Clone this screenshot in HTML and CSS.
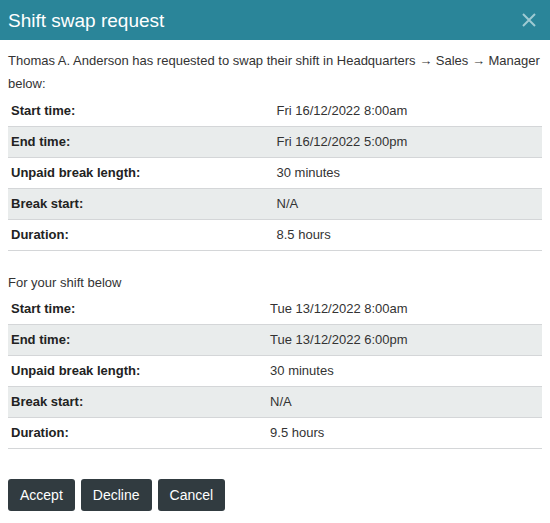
FILE: index.html
```html
<!DOCTYPE html>
<html>
<head>
<meta charset="utf-8">
<link rel="stylesheet" href="styles.css">
</head>
<body>
<div class="modal">
  <div class="modal-header">
    <h1 class="title">Shift swap request</h1>
    <button class="close" aria-label="Close">
      <svg width="14" height="14" viewBox="0 0 14 14"><path d="M1 1 L13 13 M13 1 L1 13" stroke="currentColor" stroke-width="2" fill="none"/></svg>
    </button>
  </div>
  <div class="modal-body">
    <p class="intro">Thomas A. Anderson has requested to swap their shift in Headquarters → Sales → Manager below:</p>
    <table class="details">
      <tr><th>Start time:</th><td>Fri 16/12/2022 8:00am</td></tr>
      <tr class="alt"><th>End time:</th><td>Fri 16/12/2022 5:00pm</td></tr>
      <tr><th>Unpaid break length:</th><td>30 minutes</td></tr>
      <tr class="alt"><th>Break start:</th><td>N/A</td></tr>
      <tr><th>Duration:</th><td>8.5 hours</td></tr>
    </table>
    <p class="intro second">For your shift below</p>
    <table class="details">
      <tr><th>Start time:</th><td>Tue 13/12/2022 8:00am</td></tr>
      <tr class="alt"><th>End time:</th><td>Tue 13/12/2022 6:00pm</td></tr>
      <tr><th>Unpaid break length:</th><td>30 minutes</td></tr>
      <tr class="alt"><th>Break start:</th><td>N/A</td></tr>
      <tr><th>Duration:</th><td>9.5 hours</td></tr>
    </table>
    <div class="actions">
      <button class="btn">Accept</button>
      <button class="btn">Decline</button>
      <button class="btn">Cancel</button>
    </div>
  </div>
</div>
</body>
</html>
```
FILE: styles.css
```css
html, body {
  margin: 0;
  padding: 0;
  background: #ffffff;
}
body {
  font-family: "Liberation Sans", Arial, sans-serif;
  font-size: 13px;
  color: #333333;
}
.modal-header {
  height: 40px;
  background: #2a8599;
  display: flex;
  align-items: center;
  justify-content: space-between;
  padding: 0 14px 0 8px;
}
.title {
  margin: 0;
  font-size: 19px;
  font-weight: normal;
  color: #ffffff;
  line-height: 1;
}
.close {
  background: none;
  border: 0;
  padding: 0;
  color: #9fcad3;
  display: flex;
}
.modal-body {
  padding: 0 8px;
}
.intro {
  margin: 9px 0 1px;
  line-height: 23px;
}
.intro.second {
  margin: 20px 0 0;
}
.details {
  width: 100%;
  border-collapse: collapse;
}
.details th,
.details td {
  padding: 8px 3px;
  line-height: 14px;
  text-align: left;
  border-bottom: 1px solid #d4d6d8;
  vertical-align: middle;
}
.details th {
  font-weight: bold;
  color: #222222;
}
.details tr.alt th,
.details tr.alt td {
  background: #e9ecec;
}
.actions {
  display: flex;
  gap: 6px;
  margin-top: 30px;
}
.btn {
  font-family: "Liberation Sans", Arial, sans-serif;
  font-size: 14px;
  height: 32px;
  padding: 0 12px;
  border: 0;
  border-radius: 3px;
  background: #313b40;
  color: #ffffff;
}
```
